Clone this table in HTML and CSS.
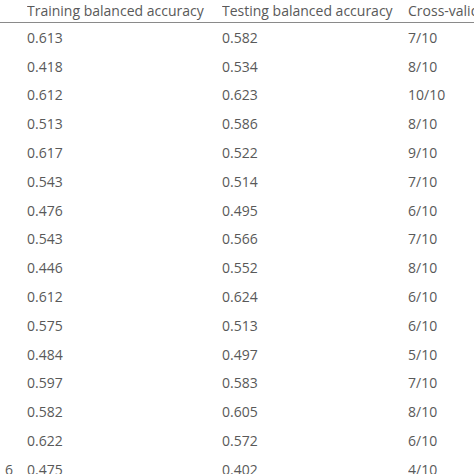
FILE: index.html
```html
<!DOCTYPE html>
<html>
<head>
<meta charset="utf-8">
<link rel="stylesheet" href="styles.css">
</head>
<body>
<div class="table">
  <div class="row head">
    <div class="c0"></div>
    <div class="c1">Training balanced accuracy</div>
    <div class="c2">Testing balanced accuracy</div>
    <div class="c3">Cross-validation</div>
  </div>
  <div class="row"><div class="c0"></div><div class="c1">0.613</div><div class="c2">0.582</div><div class="c3">7/10</div></div>
  <div class="row"><div class="c0"></div><div class="c1">0.418</div><div class="c2">0.534</div><div class="c3">8/10</div></div>
  <div class="row"><div class="c0"></div><div class="c1">0.612</div><div class="c2">0.623</div><div class="c3">10/10</div></div>
  <div class="row"><div class="c0"></div><div class="c1">0.513</div><div class="c2">0.586</div><div class="c3">8/10</div></div>
  <div class="row"><div class="c0"></div><div class="c1">0.617</div><div class="c2">0.522</div><div class="c3">9/10</div></div>
  <div class="row"><div class="c0"></div><div class="c1">0.543</div><div class="c2">0.514</div><div class="c3">7/10</div></div>
  <div class="row"><div class="c0"></div><div class="c1">0.476</div><div class="c2">0.495</div><div class="c3">6/10</div></div>
  <div class="row"><div class="c0"></div><div class="c1">0.543</div><div class="c2">0.566</div><div class="c3">7/10</div></div>
  <div class="row"><div class="c0"></div><div class="c1">0.446</div><div class="c2">0.552</div><div class="c3">8/10</div></div>
  <div class="row"><div class="c0"></div><div class="c1">0.612</div><div class="c2">0.624</div><div class="c3">6/10</div></div>
  <div class="row"><div class="c0"></div><div class="c1">0.575</div><div class="c2">0.513</div><div class="c3">6/10</div></div>
  <div class="row"><div class="c0"></div><div class="c1">0.484</div><div class="c2">0.497</div><div class="c3">5/10</div></div>
  <div class="row"><div class="c0"></div><div class="c1">0.597</div><div class="c2">0.583</div><div class="c3">7/10</div></div>
  <div class="row"><div class="c0"></div><div class="c1">0.582</div><div class="c2">0.605</div><div class="c3">8/10</div></div>
  <div class="row"><div class="c0"></div><div class="c1">0.622</div><div class="c2">0.572</div><div class="c3">6/10</div></div>
  <div class="row"><div class="c0">6</div><div class="c1">0.475</div><div class="c2">0.402</div><div class="c3">4/10</div></div>
</div>
</body>
</html>
```
FILE: styles.css
```css
html, body {
  margin: 0;
  padding: 0;
  background: #ffffff;
}
body {
  width: 474px;
  height: 474px;
  overflow: hidden;
  font-family: "Open Sans", "Noto Sans", sans-serif;
  font-size: 14px;
  color: #595959;
}
.table {
  display: flex;
  flex-direction: column;
  width: 474px;
}
.row {
  display: grid;
  grid-template-columns: 27px 195px 186px 66px;
  height: 28.8px;
  flex: none;
  align-items: center;
  white-space: nowrap;
}
.row > div {
  overflow: hidden;
}
.head {
  height: 23px;
  padding-top: 1px;
  box-sizing: border-box;
  align-items: start;
  border-bottom: 1px solid #8a8a8a;
}
.head + .row {
  margin-top: 0;
}
.c0 {
  padding-left: 5px;
}
```
